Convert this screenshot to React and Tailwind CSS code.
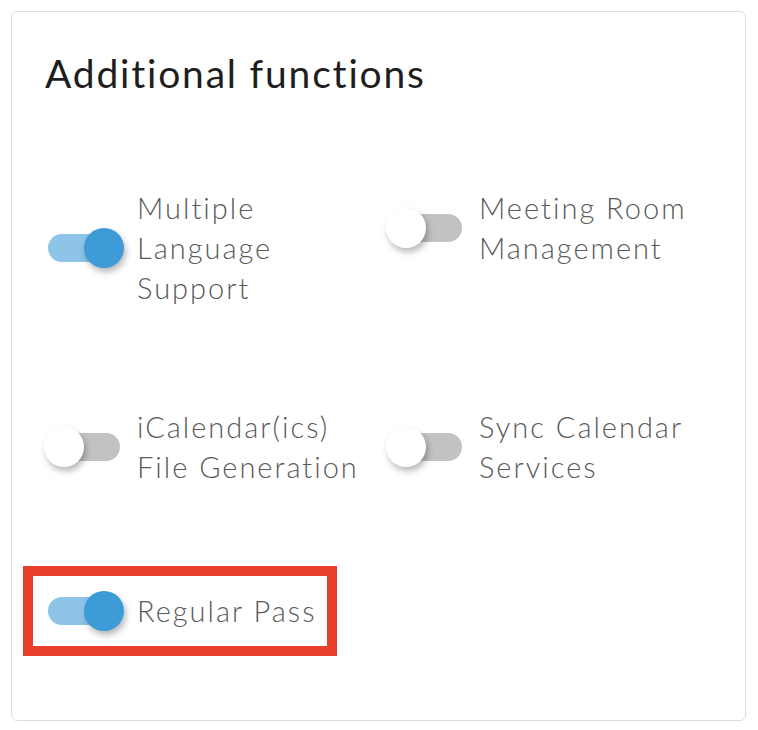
import React from 'react';

const items = [
  { label: ['Multiple', 'Language', 'Support'], on: true },
  { label: ['Meeting Room', 'Management'], on: false },
  { label: ['iCalendar(ics)', 'File Generation'], on: false },
  { label: ['Sync Calendar', 'Services'], on: false },
  { label: ['Regular Pass'], on: true, marked: true },
];

const Toggle = ({ on }) => (
  <div className="relative w-[80px] h-[40px] shrink-0">
    <div
      className={`absolute left-[4px] right-[4px] top-[6px] h-[28px] rounded-full ${
        on ? 'bg-[#8ec4e8]' : 'bg-[#c2c2c2]'
      }`}
    />
    <div
      className={`absolute top-0 w-[40px] h-[40px] rounded-full shadow-[2px_4px_6px_rgba(0,0,0,0.28)] ${
        on ? 'right-0 bg-[#3d9bd7]' : 'left-0 bg-white'
      }`}
    />
  </div>
);

const Item = ({ label, on, marked }) => (
  <div className={`relative flex items-center ${marked ? 'mt-[5px]' : ''}`}>
    {marked && (
      <div className="absolute left-[-21px] top-[-25px] w-[314px] h-[90px] border-[10px] border-[#e8402a] pointer-events-none" />
    )}
    <Toggle on={on} />
    <div className="ml-[13px] text-[29px] leading-[40px] tracking-[2px] font-light text-[#5a5a5a] font-[Lato,sans-serif]">
      {label.map((l) => (
        <div key={l}>{l}</div>
      ))}
    </div>
  </div>
);

export default function App() {
  return (
    <div className="bg-white w-[758px] h-[730px] pt-[11px] pl-[11px]">
      <div className="w-[735px] h-[710px] border-[1.5px] border-[#dedede] rounded-[6px] pl-[32px] pt-[37px]">
        <h2 className="pl-[1px] text-[39px] leading-[48px] tracking-[1.8px] text-[#1e1e1e] font-[Lato,sans-serif]">
          Additional functions
        </h2>
        <div className="grid grid-cols-[342px_342px] items-start gap-y-[99px] mt-[91px]">
          {items.map((it) => (
            <Item key={it.label[0]} {...it} />
          ))}
        </div>
      </div>
    </div>
  );
}
